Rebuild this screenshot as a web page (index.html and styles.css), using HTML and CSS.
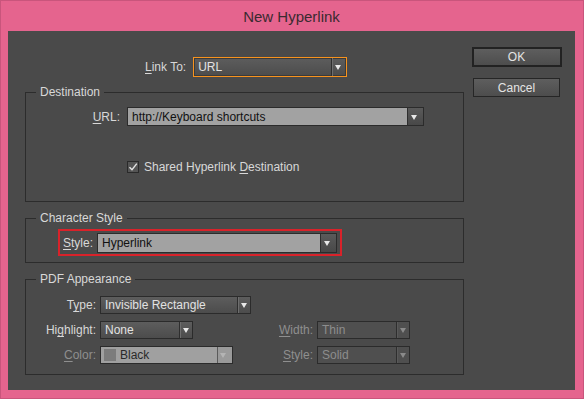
FILE: index.html
```html
<!DOCTYPE html>
<html lang="en">
<head>
    <meta charset="UTF-8">
    <title>New Hyperlink</title>
    <link rel="stylesheet" href="styles.css">
</head>
<body>
    <div class="window">
        <div class="title-bar">New Hyperlink</div>
        <div class="dialog">
            <div class="main">
                <div class="link-row">
                    <span class="label"><u>L</u>ink To:</span>
                    <div class="select focus w-link">
                        <span class="val">URL</span>
                        <span class="arrow"></span>
                    </div>
                </div>

                <fieldset class="group dest">
                    <legend>Destination</legend>
                    <div class="url-row">
                        <span class="label url-label"><u>U</u>RL:</span>
                        <div class="select light w-url">
                            <span class="val">http://Keyboard shortcuts</span>
                            <span class="arrow"></span>
                        </div>
                    </div>
                    <div class="check-row">
                        <span class="checkbox">
                            <svg width="10" height="10" viewBox="0 0 10 10"><path d="M1.5 5.2 L4 7.8 L8.8 1.6" fill="none" stroke="#e4e4e4" stroke-width="1.4"/></svg>
                        </span>
                        <span class="label">Shared Hyperlink <u>D</u>estination</span>
                    </div>
                </fieldset>

                <fieldset class="group charstyle">
                    <legend>Character Style</legend>
                    <div class="highlight-box">
                        <span class="label"><u>S</u>tyle:</span>
                        <div class="select light w-style">
                            <span class="val">Hyperlink</span>
                            <span class="arrow"></span>
                        </div>
                    </div>
                </fieldset>

                <fieldset class="group pdf">
                    <legend>PDF Appearance</legend>
                    <div class="pdf-grid">
                        <span class="label">T<u>y</u>pe:</span>
                        <div class="select w-type">
                            <span class="val">Invisible Rectangle</span>
                            <span class="arrow"></span>
                        </div>
                        <span></span>
                        <span></span>

                        <span class="label">Hi<u>g</u>hlight:</span>
                        <div class="select w-high">
                            <span class="val">None</span>
                            <span class="arrow"></span>
                        </div>
                        <span class="label off"><u>W</u>idth:</span>
                        <div class="select off w-small">
                            <span class="val">Thin</span>
                            <span class="arrow"></span>
                        </div>

                        <span class="label off"><u>C</u>olor:</span>
                        <div class="select light off w-color">
                            <span class="swatch"></span>
                            <span class="val">Black</span>
                            <span class="arrow"></span>
                        </div>
                        <span class="label off"><u>S</u>tyle:</span>
                        <div class="select off w-small">
                            <span class="val">Solid</span>
                            <span class="arrow"></span>
                        </div>
                    </div>
                </fieldset>
            </div>

            <div class="buttons">
                <button class="btn default">OK</button>
                <button class="btn">Cancel</button>
            </div>
        </div>
    </div>
</body>
</html>
```

FILE: styles.css
```css
html, body {
    margin: 0;
    padding: 0;
}
body {
    font-family: "Liberation Sans", Arial, sans-serif;
    font-size: 12px;
    background-color: #e5648e;
}
.window {
    width: 584px;
    height: 399px;
    box-sizing: border-box;
    background-color: #e5648e;
    border: 1px solid #c9557c;
    padding: 0 8px 8px 7px;
}
.title-bar {
    height: 30px;
    line-height: 31px;
    text-align: center;
    font-size: 15px;
    color: #3a2a30;
}
.dialog {
    display: flex;
    height: 359px;
    background-color: #4a4a4a;
    color: #d8d8d8;
    padding-left: 17px;
}
.main {
    width: 439px;
}
u {
    text-decoration: underline;
    text-underline-offset: 2px;
}
.label {
    white-space: nowrap;
}
.link-row {
    display: flex;
    align-items: center;
    margin-top: 26px;
    padding-left: 120px;
    gap: 7px;
    height: 20px;
}

/* select boxes */
.select {
    display: flex;
    align-items: center;
    box-sizing: border-box;
    height: 18px;
    border: 1px solid #2b2b2b;
    background: linear-gradient(#5d5d5d, #4c4c4c);
    color: #e2e2e2;
}
.select .val {
    flex: 1;
    padding-left: 4px;
    white-space: nowrap;
    overflow: hidden;
}
.select .arrow {
    position: relative;
    width: 12px;
    height: 100%;
    border-left: 1px solid #2e2e2e;
    box-shadow: inset 1px 0 #6e6e6e;
}
.select .arrow::after {
    content: "";
    position: absolute;
    left: 3px;
    top: 50%;
    margin-top: -2px;
    border-left: 3.5px solid transparent;
    border-right: 3.5px solid transparent;
    border-top: 5px solid #e8e8e8;
}
.select.focus {
    height: 20px;
    border: 1px solid #f7931e;
    box-shadow: inset 0 0 0 1px #3a3a3a;
}
.select.focus .arrow {
    width: 14px;
}
.select.light {
    background: #a2a2a2;
    color: #111;
}
.select.light .arrow {
    width: 15px;
    background: linear-gradient(#5a5a5a, #484848);
    box-shadow: none;
}
.select.off {
    color: #8d8d8d;
    background: #4f4f4f;
}
.select.off .arrow {
    box-shadow: inset 1px 0 #5a5a5a;
}
.select.off .arrow::after {
    border-top-color: #8a8a8a;
}
.select.light.off {
    background: #a0a0a0;
    color: #2a2a2a;
}
.select.light.off .arrow {
    background: #9a9a9a;
    border-left: 1px solid #a0a0a0;
}
.select.light.off .arrow::after {
    border-top-color: #b4b4b4;
}
.swatch {
    width: 12px;
    height: 12px;
    margin-left: 3px;
    background: #7c7c7c;
}

.w-link { width: 154px; }
.w-url { width: 297px; height: 19px; }
.w-style { width: 235px; height: 20px; }
.w-type { width: 151px; }
.w-high { width: 93px; }
.w-color { width: 133px; }
.w-small { width: 93px; }

/* groups */
.group {
    margin: 0;
    min-width: 0;
    border: 1px solid #2c2c2c;
    padding: 0;
}
.group legend {
    padding: 0 4px;
    margin-left: 10px;
    line-height: 14px;
    color: #d8d8d8;
}
.dest {
    margin-top: 8px;
    padding-bottom: 27px;
}
.url-row {
    display: flex;
    align-items: center;
    margin-top: 8px;
}
.url-label {
    width: 94px;
    text-align: right;
    margin-right: 7px;
}
.check-row {
    display: flex;
    align-items: center;
    margin-top: 34px;
    padding-left: 101px;
    gap: 5px;
}
.checkbox {
    display: flex;
    align-items: center;
    justify-content: center;
    width: 12px;
    height: 12px;
    box-sizing: border-box;
    border: 1px solid #2a2a2a;
    background: #555;
}
.charstyle {
    margin-top: 9px;
    padding-bottom: 6px;
}
.highlight-box {
    display: flex;
    align-items: center;
    gap: 4px;
    width: 284px;
    height: 27px;
    box-sizing: border-box;
    margin: 4px 0 0 32px;
    padding: 0 3px 0 3px;
    border: 2px solid #d9222a;
}
.highlight-box .select {
    flex: 1;
}
.pdf {
    margin-top: 9px;
    padding-bottom: 10px;
}
.pdf-grid {
    display: grid;
    grid-template-columns: 70px 150px 59px 93px;
    grid-auto-rows: 18px;
    column-gap: 4px;
    row-gap: 7px;
    align-items: center;
    margin-top: 10px;
}
.pdf-grid .label {
    text-align: right;
}
.label.off {
    color: #8f8f8f;
}

/* buttons */
.buttons {
    display: flex;
    flex-direction: column;
    align-items: center;
    width: 91px;
    margin-left: 7px;
    padding-top: 16px;
}
.btn {
    font-family: "Liberation Sans", Arial, sans-serif;
    font-size: 12px;
    color: #e4e4e4;
    background: linear-gradient(#5e5e5e, #4d4d4d);
    border: 1px solid #262626;
    width: 87px;
    height: 19px;
    padding: 0;
    margin-bottom: 11px;
}
.btn.default {
    width: 90px;
    height: 20px;
    border: 2px solid #222;
}
```
